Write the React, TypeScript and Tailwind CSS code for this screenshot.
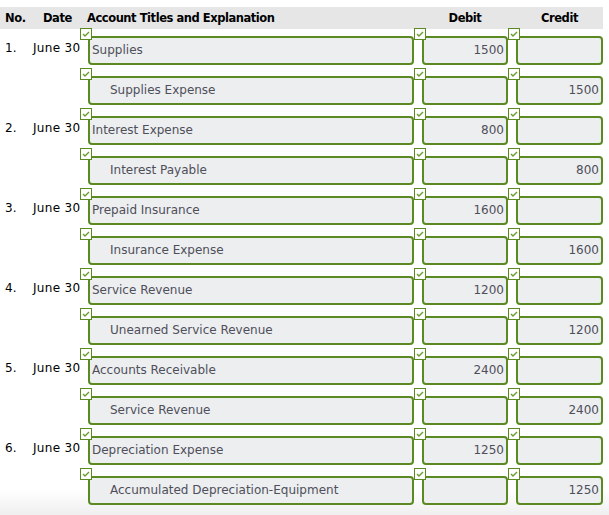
import React from "react";

type Entry = { no: string; debitAcct: string; creditAcct: string; amount: string };

const entries: Entry[] = [
  { no: "1.", debitAcct: "Supplies", creditAcct: "Supplies Expense", amount: "1500" },
  { no: "2.", debitAcct: "Interest Expense", creditAcct: "Interest Payable", amount: "800" },
  { no: "3.", debitAcct: "Prepaid Insurance", creditAcct: "Insurance Expense", amount: "1600" },
  { no: "4.", debitAcct: "Service Revenue", creditAcct: "Unearned Service Revenue", amount: "1200" },
  { no: "5.", debitAcct: "Accounts Receivable", creditAcct: "Service Revenue", amount: "2400" },
  { no: "6.", debitAcct: "Depreciation Expense", creditAcct: "Accumulated Depreciation-Equipment", amount: "1250" },
];

function Check() {
  return (
    <div className="absolute left-[-8px] top-[-8px] z-10 flex h-[12px] w-[12px] items-center justify-center border border-[#5b8a22] bg-white">
      <svg width="8" height="6" viewBox="0 0 8 6">
        <path d="M1 3 L3 5 L7 1" fill="none" stroke="#6b9b2e" strokeWidth="1.4" />
      </svg>
    </div>
  );
}

function Field({ w, text, align, indent }: { w: string; text: string; align: "left" | "right"; indent?: boolean }) {
  return (
    <div className={`relative ${w}`}>
      <Check />
      <div
        className={`flex h-[29px] items-center rounded-[4px] border-2 border-[#5b8a22] bg-[#eceef0] pb-[1px] text-[12px] text-[#4f4f5a] ${
          align === "right" ? "justify-end pr-[2px]" : indent ? "pl-[20px]" : "pl-[2px]"
        }`}
      >
        {text}
      </div>
    </div>
  );
}

function Row({ no, date, acct, debit, credit, indent }: { no: string; date: string; acct: string; debit: string; credit: string; indent?: boolean }) {
  return (
    <div className="flex h-[40px] pt-[7px]">
      <div className="flex w-[88px] pt-[5px] text-[12px] leading-[14px] text-black">
        <div className="w-[33px] pl-[5px]">{no}</div>
        <div className="tracking-[0.3px]">{date}</div>
      </div>
      <Field w="w-[326px]" text={acct} align="left" indent={indent} />
      <div className="w-[8px]" />
      <Field w="w-[86px]" text={debit} align="right" />
      <div className="w-[8px]" />
      <Field w="w-[87px]" text={credit} align="right" />
    </div>
  );
}

export default function App() {
  return (
    <div
      className="h-[515px] w-[609px] overflow-hidden bg-[linear-gradient(to_bottom,#ffffff_490px,#efefef_515px)] pt-[7px]"
      style={{ fontFamily: '"DejaVu Sans", Verdana, sans-serif' }}
    >
      <div className="flex h-[22px] w-[603px] items-center bg-[#e6e6e6] pt-[2px] text-[11.5px] font-bold tracking-[-0.45px] text-black">
        <div className="w-[43px] pl-[5px]">No.</div>
        <div className="w-[44px]">Date</div>
        <div className="w-[335px]">Account Titles and Explanation</div>
        <div className="w-[86px] text-center">Debit</div>
        <div className="w-[95px] pl-[8px] text-center">Credit</div>
      </div>
      {entries.map((e) => (
        <React.Fragment key={e.no}>
          <Row no={e.no} date="June 30" acct={e.debitAcct} debit={e.amount} credit="" />
          <Row no="" date="" acct={e.creditAcct} debit="" credit={e.amount} indent />
        </React.Fragment>
      ))}
    </div>
  );
}
